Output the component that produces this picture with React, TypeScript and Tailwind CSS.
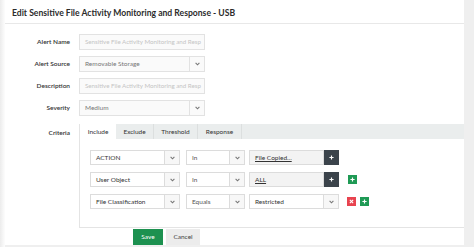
import React from "react";

const Chevron = () => (
  <svg width="5" height="4" viewBox="0 0 5 4" className="block">
    <path d="M0.6 0.8 L2.5 2.8 L4.4 0.8" fill="none" stroke="#777" strokeWidth="1.1" />
  </svg>
);

const Plus = ({ size = 5 }: { size?: number }) => (
  <svg width={size} height={size} viewBox="0 0 6 6" className="block">
    <path d="M3 0.5 V5.5 M0.5 3 H5.5" stroke="#fff" strokeWidth="1.4" />
  </svg>
);

const Cross = () => (
  <svg width="5" height="5" viewBox="0 0 6 6" className="block">
    <path d="M1 1 L5 5 M5 1 L1 5" stroke="#fff" strokeWidth="1.3" />
  </svg>
);

function FormSelect({ text }: { text: string }) {
  return (
    <div className="flex h-[16px] w-[126px] border border-[#e2e2e2] bg-[#fafafa]">
      <div className="flex flex-1 items-center pl-[5px] text-[6.5px] text-[#777]">{text}</div>
      <div className="flex w-[15px] items-center justify-center border-l border-[#e2e2e2]">
        <Chevron />
      </div>
    </div>
  );
}

function FormInput({ placeholder }: { placeholder: string }) {
  return (
    <div className="flex h-[16px] w-[126px] items-center whitespace-nowrap border border-[#e2e2e2] bg-[#fafafa] pl-[5px] text-[6.2px] text-[#c4c4c4]">
      {placeholder}
    </div>
  );
}

function RowSelect({ text, w, dark }: { text: string; w: number; dark?: boolean }) {
  return (
    <div
      className="flex h-[15px] border border-[#dcdcdc] bg-white"
      style={{ width: w }}
    >
      <div className={`flex flex-1 items-center pl-[5px] text-[6.5px] ${dark ? "text-[#333]" : "text-[#555]"}`}>
        {text}
      </div>
      <div className="flex w-[15px] items-center justify-center border-l border-[#dcdcdc] bg-[#f7f7f7]">
        <Chevron />
      </div>
    </div>
  );
}

function ValueBtn({ text }: { text: string }) {
  return (
    <div className="flex h-[15px] w-[90px]">
      <div className="flex flex-1 items-center border border-[#dcdcdc] bg-[#f3f3f3] pl-[5px] text-[6.5px] text-[#333] underline">
        {text}
      </div>
      <div className="flex w-[15px] items-center justify-center bg-[#3b434b]">
        <Plus />
      </div>
    </div>
  );
}

const GreenBtn = () => (
  <div className="flex h-[9px] w-[9px] items-center justify-center bg-[#1f9a55]">
    <Plus size={5} />
  </div>
);
const RedBtn = () => (
  <div className="flex h-[9px] w-[9px] items-center justify-center bg-[#e8434f]">
    <Cross />
  </div>
);

export default function App() {
  const labels = "w-[65px] text-right text-[6.5px] font-semibold text-[#333]";
  return (
    <div className="flex h-[247px] w-[474px] bg-[#efefef] font-['Lato','Open_Sans',sans-serif]">
      <div className="w-[5px] bg-gradient-to-r from-[#ececec] to-[#fdfdfd]" />
      <div className="flex h-[245px] flex-1 flex-col bg-white">
        <div className="flex h-[24px] items-end border-b border-[#e8e8e8] pb-[4px] pl-[7px]">
          <span className="text-[8.6px] font-bold leading-[11px] text-[#2b2b2b]">
            Edit Sensitive File Activity Monitoring and Response - USB
          </span>
        </div>
        <div className="flex flex-col gap-[6px] pt-[10px]">
          <div className="flex items-center gap-[9px]">
            <div className={labels}>Alert Name</div>
            <FormInput placeholder="Sensitive File Activity Monitoring and Resp" />
          </div>
          <div className="flex items-center gap-[9px]">
            <div className={labels}>Alert Source</div>
            <FormSelect text="Removable Storage" />
          </div>
          <div className="flex items-center gap-[9px]">
            <div className={labels}>Description</div>
            <FormInput placeholder="Sensitive File Activity Monitoring and Resp" />
          </div>
          <div className="flex items-center gap-[9px]">
            <div className={labels}>Severity</div>
            <FormSelect text="Medium" />
          </div>
        </div>
        <div className="mt-[8px] flex gap-[9px]">
          <div className={`${labels} pt-[4px]`}>Criteria</div>
          <div className="flex flex-1 flex-col">
            <div className="flex h-[104px] flex-col border-b border-l border-[#e4e4e4]">
              <div className="flex h-[15px] bg-[#eaeded] text-[6.5px] text-[#333]">
                <div className="flex w-[36px] items-center justify-center bg-white">Include</div>
                <div className="flex w-[38px] items-center justify-center border-r border-[#dcdfdf]">Exclude</div>
                <div className="flex w-[44px] items-center justify-center border-r border-[#dcdfdf]">Threshold</div>
                <div className="flex w-[44px] items-center justify-center border-r border-[#dcdfdf]">Response</div>
              </div>
              <div className="flex flex-col gap-[7px] pl-[10px] pt-[11px]">
                <div className="flex items-center">
                  <RowSelect text="ACTION" w={90} dark />
                  <div className="w-[6px]" />
                  <RowSelect text="In" w={59} />
                  <div className="w-[4px]" />
                  <ValueBtn text="File Copied..." />
                </div>
                <div className="flex items-center">
                  <RowSelect text="User Object" w={90} dark />
                  <div className="w-[6px]" />
                  <RowSelect text="In" w={59} />
                  <div className="w-[4px]" />
                  <ValueBtn text="ALL" />
                  <div className="w-[9px]" />
                  <GreenBtn />
                </div>
                <div className="flex items-center">
                  <RowSelect text="File Classification" w={90} dark />
                  <div className="w-[6px]" />
                  <RowSelect text="Equals" w={59} />
                  <div className="w-[4px]" />
                  <RowSelect text="Restricted" w={90} dark />
                  <div className="w-[8px]" />
                  <RedBtn />
                  <div className="w-[4px]" />
                  <GreenBtn />
                </div>
              </div>
            </div>
            <div className="mt-[1px] flex gap-[3px] pl-[54px]">
              <div className="flex h-[16px] w-[30px] items-center justify-center bg-[#1d9150] text-[6.5px] text-white">
                Save
              </div>
              <div className="flex h-[16px] w-[34px] items-center justify-center bg-[#ececec] text-[6.5px] text-[#444]">
                Cancel
              </div>
            </div>
          </div>
        </div>
      </div>
      <div className="mt-[5px] w-[10px] bg-[#efefef]" />
    </div>
  );
}
